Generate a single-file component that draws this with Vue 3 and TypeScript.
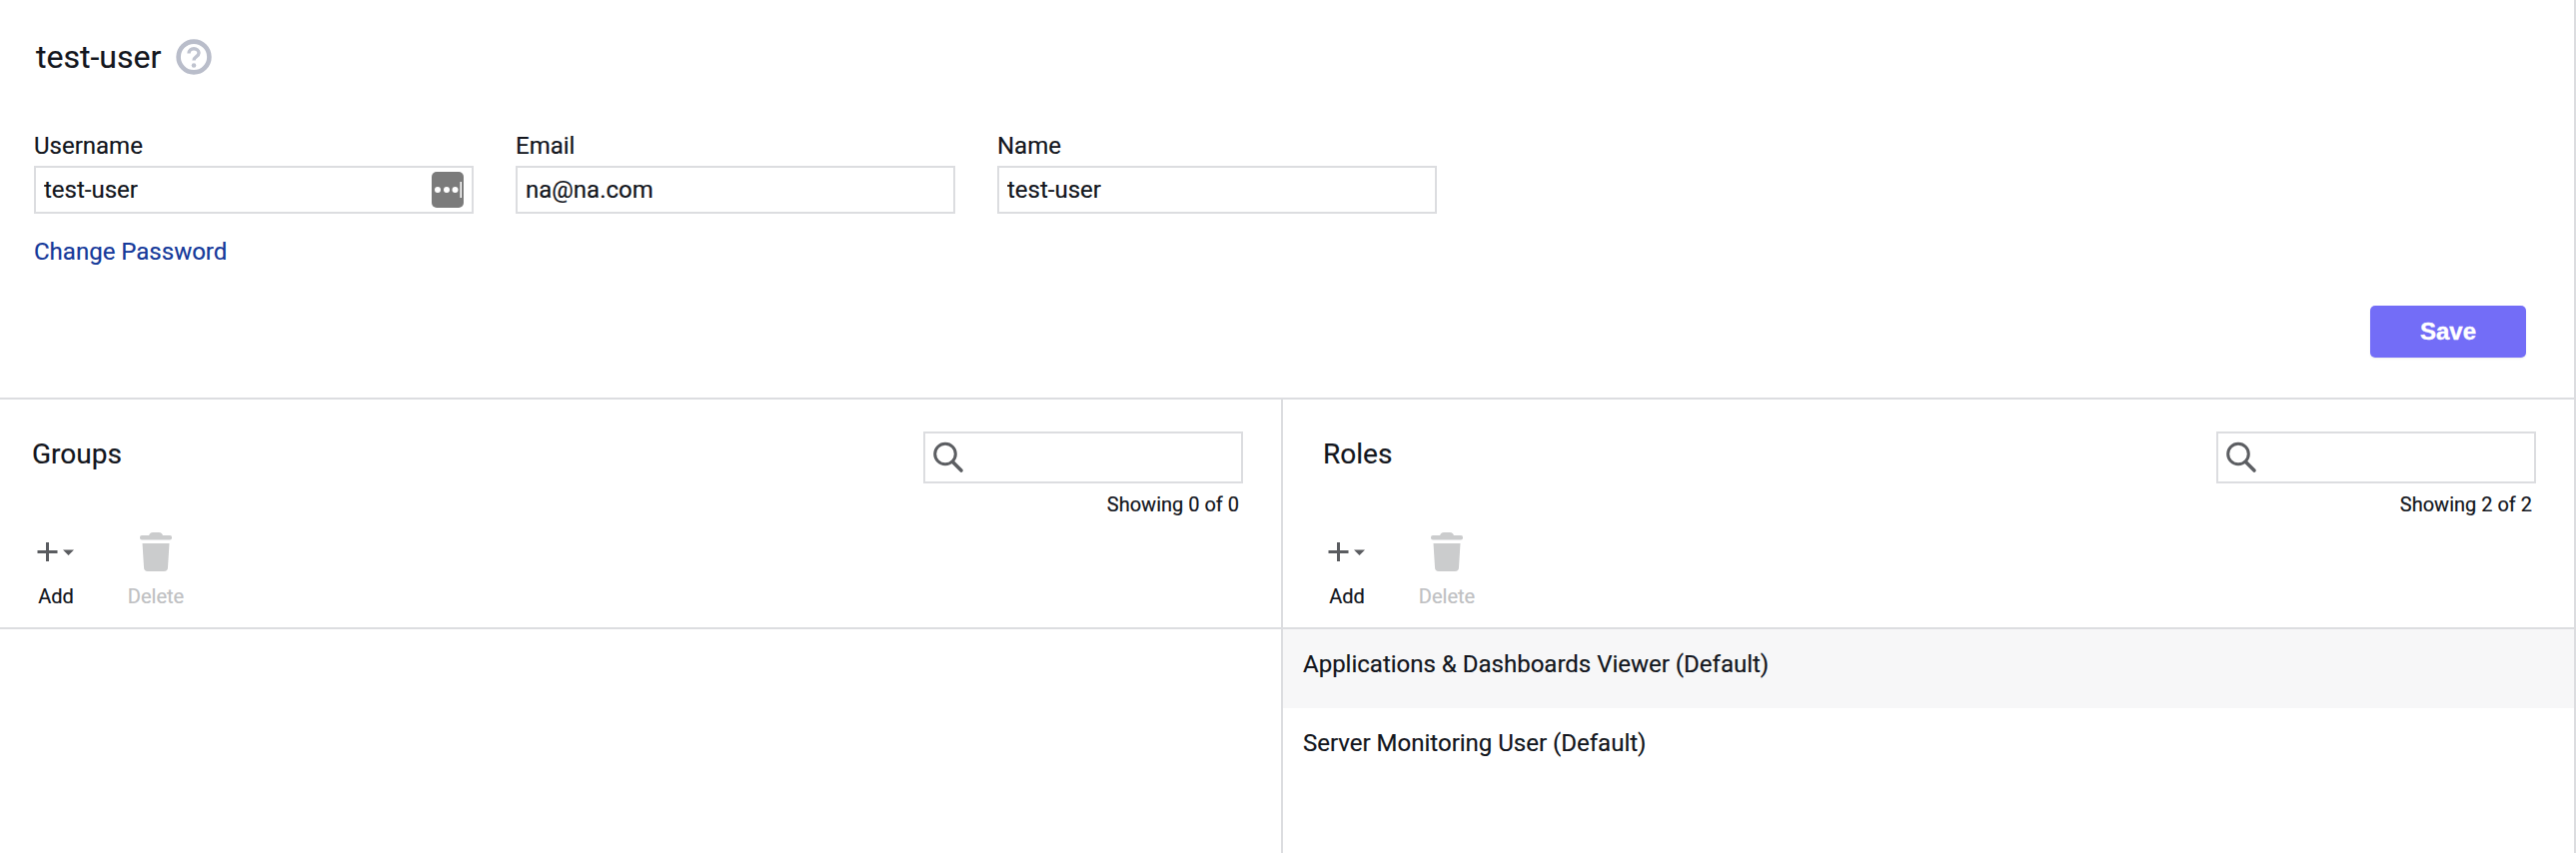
<script setup lang="ts">
interface Panel {
  key: string
  title: string
  count: string
  rows: string[]
}

const panels: Panel[] = [
  { key: 'groups', title: 'Groups', count: 'Showing 0 of 0', rows: [] },
  {
    key: 'roles',
    title: 'Roles',
    count: 'Showing 2 of 2',
    rows: ['Applications & Dashboards Viewer (Default)', 'Server Monitoring User (Default)']
  }
]
</script>

<template>
  <div class="page">
    <section class="profile">
      <div class="heading">
        <h1>test-user</h1>
        <svg class="help" width="36" height="36" viewBox="0 0 36 36">
          <circle cx="18" cy="18" r="15.4" fill="none" stroke="#b9bdca" stroke-width="4.6" />
          <path d="M13 14.5c0-3 2.200-4.800 5-4.800s5 1.800 5 4.400c0 3.600-5 3.600-5 7.400" fill="none" stroke="#bfc3cf" stroke-width="3.400" />
          <circle cx="18" cy="26.500" r="2.300" fill="#bfc3cf" />
        </svg>
      </div>

      <div class="fields">
        <label class="field">
          <span>Username</span>
          <span class="input-wrap">
            <input value="test-user" />
            <span class="key-btn">
              <svg width="32" height="36" viewBox="0 0 32 36">
                <circle cx="6" cy="18" r="3" fill="#fff" />
                <circle cx="15" cy="18" r="3" fill="#fff" />
                <circle cx="23.500" cy="18" r="3" fill="#fff" />
                <rect x="28.500" y="10" width="1.500" height="16" fill="#fff" />
              </svg>
            </span>
          </span>
        </label>
        <label class="field">
          <span>Email</span>
          <input value="na@na.com" />
        </label>
        <label class="field">
          <span>Name</span>
          <input value="test-user" />
        </label>
      </div>

      <a class="change-link" href="#">Change Password</a>

      <div class="actions">
        <button class="save" type="button">Save</button>
      </div>
    </section>

    <section class="panels">
      <div v-for="panel in panels" :key="panel.key" class="panel" :class="`panel-${panel.key}`">
        <header class="panel-head">
          <div class="panel-top">
            <h2>{{ panel.title }}</h2>
            <div class="search-col">
              <div class="search">
                <svg width="34" height="34" viewBox="0 0 34 34">
                  <circle cx="14" cy="14.500" r="10.300" fill="none" stroke="#5c5e62" stroke-width="3" />
                  <path d="M21.500 22.500l8.500 8.500" stroke="#5c5e62" stroke-width="3.600" stroke-linecap="round" />
                </svg>
                <input />
              </div>
              <div class="count">{{ panel.count }}</div>
            </div>
          </div>
          <div class="toolbar">
            <button class="tool" type="button">
              <svg width="38" height="39" viewBox="0 0 38 39">
                <path d="M10.500 10v19M0.500 19.500h20" stroke="#5a5c60" stroke-width="3" fill="none" />
                <path d="M26 17.500h11l-5.500 5.500z" fill="#5a5c60" />
              </svg>
              <span>Add</span>
            </button>
            <button class="tool tool-off" type="button">
              <svg width="32" height="39" viewBox="0 0 32 39">
                <path d="M9 4c0-2.500 2-4 4-4h6c2 0 4 1.500 4 4z" fill="#cbcccd" />
                <rect x="0" y="3" width="32" height="4.500" rx="2" fill="#cbcccd" />
                <path d="M2.500 11H29.500L28 35a4 4 0 0 1-4 4H8a4 4 0 0 1-4-4z" fill="#cbcccd" />
              </svg>
              <span>Delete</span>
            </button>
          </div>
        </header>
        <ul class="rows">
          <li v-for="(row, i) in panel.rows" :key="row" :class="{ shaded: i === 0 }">{{ row }}</li>
        </ul>
      </div>
    </section>
  </div>
</template>

<style scoped>
.page {
  box-sizing: border-box;
  width: 2578px;
  height: 854px;
  border-right: 2px solid #dcdde0;
  display: flex;
  flex-direction: column;
  font-family: Roboto, "Liberation Sans", sans-serif;
  font-size: 24px;
  color: #14171e;
  background: #fff;
  overflow: hidden;
  -webkit-text-stroke: 0.2px;
}

.profile {
  box-sizing: border-box;
  height: 400px;
  padding: 0 48px 0 34px;
  border-bottom: 2px solid #dcdde0;
  display: flex;
  flex-direction: column;
  align-items: flex-start;
}
.heading {
  height: 114px;
  padding-left: 2px;
  display: flex;
  align-items: center;
  gap: 15px;
}
.heading h1 {
  margin: 0;
  font-size: 32px;
  font-weight: 400;
}
.help {
  filter: blur(0.6px);
}

.fields {
  margin-top: 18px;
  display: flex;
  gap: 42px;
}
.field {
  display: flex;
  flex-direction: column;
  gap: 6px;
  line-height: 28px;
}
.field input {
  box-sizing: border-box;
  width: 440px;
  height: 48px;
  padding: 0 8px;
  border: 2px solid #dcdde0;
  outline: none;
  font: inherit;
  color: inherit;
  background: #fff;
}
.input-wrap {
  position: relative;
  display: block;
  height: 48px;
}
.key-btn {
  position: absolute;
  top: 6px;
  right: 10px;
  width: 32px;
  height: 36px;
  border-radius: 5px;
  background: #7b7b7b;
}
.key-btn svg {
  display: block;
}

.change-link {
  margin-top: 24px;
  line-height: 28px;
  color: #173b9b;
  text-decoration: none;
}

.actions {
  align-self: stretch;
  margin-top: 40px;
  display: flex;
  justify-content: flex-end;
}
.save {
  width: 156px;
  height: 52px;
  border: 0;
  border-radius: 5px;
  background: #736df7;
  color: #fff;
  font-family: "Liberation Sans", sans-serif;
  font-size: 24px;
  font-weight: 700;
  box-shadow: 0 1px 2px rgba(0, 0, 0, 0.08);
  -webkit-text-stroke: 0.4px;
}

.panels {
  flex: 1;
  display: grid;
  grid-template-columns: 1284px 1fr;
  min-height: 0;
}
.panel-groups {
  border-right: 2px solid #dcdde0;
}
.panel-head {
  box-sizing: border-box;
  height: 230px;
  padding-top: 32px;
  border-bottom: 2px solid #dcdde0;
}
.panel-top {
  display: flex;
  justify-content: space-between;
  align-items: flex-start;
  padding: 0 38px 0 32px;
}
.panel-roles .panel-top {
  padding-left: 40px;
}
.panel-top h2 {
  margin: 2px 0 0;
  font-size: 28px;
  font-weight: 400;
  line-height: 42px;
}
.search {
  box-sizing: border-box;
  width: 320px;
  height: 52px;
  padding: 6px 0 0 6px;
  border: 2px solid #dcdde0;
  display: flex;
  align-items: flex-start;
}
.search svg {
  flex: none;
}
.search input {
  flex: 1;
  min-width: 0;
  border: 0;
  outline: none;
  background: transparent;
}
.count {
  margin-top: 7px;
  padding-right: 4px;
  font-size: 20px;
  line-height: 28px;
  text-align: right;
}

.toolbar {
  margin-top: 14px;
  padding-left: 20px;
  display: flex;
  gap: 28px;
}
.panel-roles .toolbar {
  padding-left: 28px;
}
.tool {
  width: 72px;
  padding: 0;
  border: 0;
  background: none;
  display: flex;
  flex-direction: column;
  align-items: center;
  gap: 13px;
  font-family: inherit;
  font-size: 20px;
  line-height: 24px;
  color: inherit;
}
.tool-off {
  color: #c0c1c3;
}

.rows {
  margin: 0;
  padding: 0;
  list-style: none;
}
.rows li {
  height: 79px;
  padding: 21px 20px 0;
  box-sizing: border-box;
  line-height: 28px;
}
.rows li + li {
  height: 80px;
}
.shaded {
  background: #f7f7f8;
}
</style>
